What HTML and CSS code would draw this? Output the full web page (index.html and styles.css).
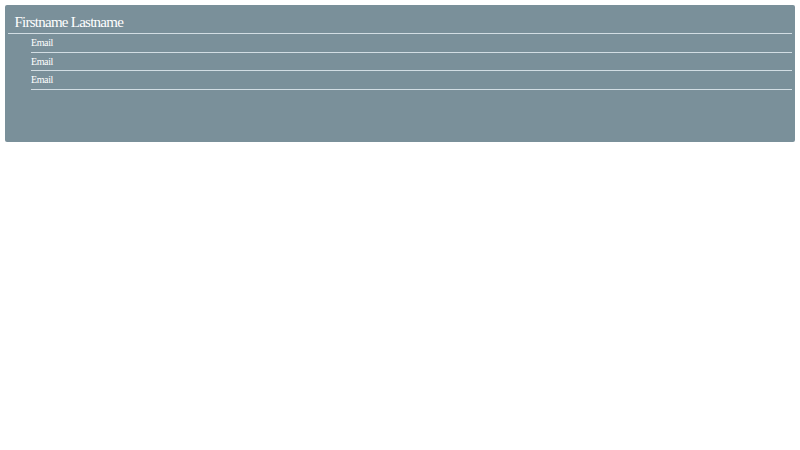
FILE: index.html
```
<!DOCTYPE html>
<html>
<head>
<meta charset="utf-8">
<link rel="stylesheet" href="styles.css">
</head>
<body>
<div class="card">
  <div class="title">Firstname Lastname</div>
  <ul class="list">
    <li class="row">Email</li>
    <li class="row">Email</li>
    <li class="row">Email</li>
  </ul>
</div>
</body>
</html>
```
FILE: styles.css
```
html, body { margin: 0; padding: 0; background: #ffffff; }
body { padding: 5px; font-family: "Liberation Serif", "Times New Roman", serif; }
.card {
  background: #7a909a;
  height: 131px;
  padding: 3px;
  border-radius: 2px;
  color: #ffffff;
}
.title {
  font-size: 15px;
  line-height: 18px;
  padding: 5px 7px 2px 6.5px;
  letter-spacing: -0.75px;
  border-bottom: 1px solid #d2dde3;
}
.list { list-style: none; margin: 0; padding: 0 0 0 23px; }
.row {
  font-size: 10px;
  line-height: 17.5px;
  height: 17.5px;
  letter-spacing: -0.4px;
  border-bottom: 1px solid #d2dde3;
}
```
